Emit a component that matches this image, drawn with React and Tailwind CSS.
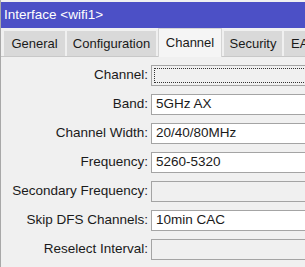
const tabs = [
  { name: 'General', w: 'w-[61px]' },
  { name: 'Configuration', w: 'w-[89px]' },
  { name: 'Channel', w: 'w-[64px]', active: true },
  { name: 'Security', w: 'w-[58px]' },
  { name: 'EAP', w: 'w-[40px]' },
]

const rows = [
  { label: 'Channel', value: '', focus: true, disabled: true },
  { label: 'Band', value: '5GHz AX' },
  { label: 'Channel Width', value: '20/40/80MHz' },
  { label: 'Frequency', value: '5260-5320' },
  { label: 'Secondary Frequency', value: '', disabled: true },
  { label: 'Skip DFS Channels', value: '10min CAC' },
  { label: 'Reselect Interval', value: '', disabled: true },
]

export default function App() {
  return (
    <div
      className="w-[305px] h-[267px] overflow-hidden bg-[#f0f0f0] border-l border-[#a8a8a8] pt-[2px] text-[13px] text-[#1a1a1a]"
      style={{ fontFamily: '"Liberation Sans", Arial, sans-serif' }}
    >
      <div className="h-[26px] bg-[#4c50c6] text-white text-[13.5px] flex items-center pl-[3px]">
        Interface &lt;wifi1&gt;
      </div>

      <div className="flex items-end pl-[3px] h-[28px] gap-[2px] whitespace-nowrap">
        {tabs.map((t) =>
          t.active ? (
            <div
              key={t.name}
              className={`${t.w} shrink-0 h-[29px] flex items-center justify-center bg-[#f5f5f5] border border-b-0 border-[#d4d4d4] -mb-px relative z-10`}
            >
              {t.name}
            </div>
          ) : (
            <div
              key={t.name}
              className={`${t.w} shrink-0 h-[25px] flex items-center justify-center bg-[#d9d9d9]`}
            >
              {t.name}
            </div>
          )
        )}
      </div>

      <div className="border-t border-[#c8c8c8] pt-[8px] flex flex-col gap-[8px] text-[13.5px]">
        {rows.map((r) => (
          <div key={r.label} className="flex items-center h-[21px]">
            <div className="w-[150px] shrink-0 text-right pr-[3px]">{r.label}:</div>
            <div
              className={`h-[21px] flex-1 -mr-[20px] border border-[#a4a4a4] flex items-center pl-[4px] ${
                r.disabled ? 'bg-[#f0f0f0]' : 'bg-white'
              }`}
            >
              {r.focus ? (
                <div className="w-full h-[15px] border border-dotted border-[#333] -ml-[2px]"></div>
              ) : (
                r.value
              )}
            </div>
          </div>
        ))}
      </div>
    </div>
  )
}
